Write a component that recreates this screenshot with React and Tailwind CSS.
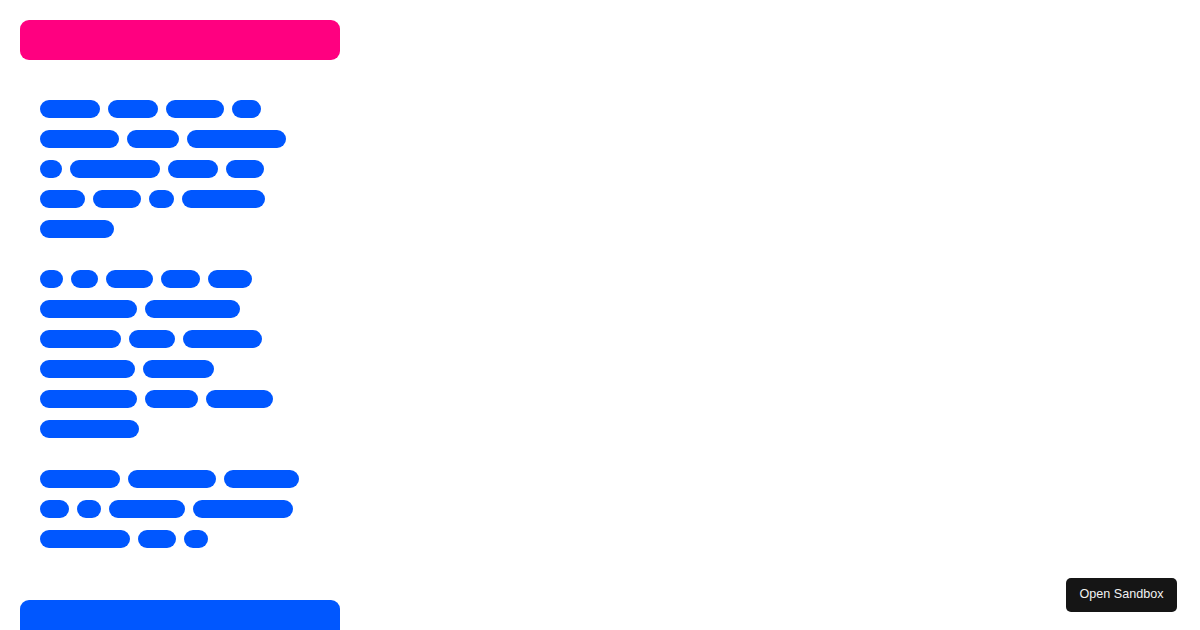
import React from "react";

const paragraphs = [
  [
    [60, 50, 58, 29],
    [79, 52, 99],
    [22, 90, 50, 38],
    [45, 48, 25, 83],
    [74],
  ],
  [
    [23, 27, 47, 39, 44],
    [97, 95],
    [81, 46, 79],
    [95, 71],
    [97, 53, 67],
    [99],
  ],
  [
    [80, 88, 75],
    [29, 24, 76, 100],
    [90, 38, 24],
  ],
];

export default function App() {
  return (
    <div className="relative min-h-[630px] w-full bg-white" style={{ fontFamily: "'Liberation Sans', Arial, sans-serif" }}>
      <div className="flex w-[360px] flex-col p-5 pb-0">
        <div className="h-10 w-[320px] rounded-[9px] bg-[#ff0080]" />
        <div className="mt-10 flex flex-col gap-8 px-5">
          {paragraphs.map((rows, pi) => (
            <div key={pi} className="flex flex-col gap-3">
              {rows.map((row, ri) => (
                <div key={ri} className="flex gap-2">
                  {row.map((w, i) => (
                    <span key={i} className="h-[18px] rounded-full bg-[#0057ff]" style={{ width: w }} />
                  ))}
                </div>
              ))}
            </div>
          ))}
        </div>
        <div className="mt-[52px] h-[30px] w-[320px] rounded-t-[9px] bg-[#0057ff]" />
      </div>
      <button className="absolute bottom-[18px] right-[23px] flex h-[34px] w-[111px] items-center justify-center rounded-[5px] bg-[#151515] pb-px text-[12.6px] text-[#f2f2f2]">
        Open Sandbox
      </button>
    </div>
  );
}
